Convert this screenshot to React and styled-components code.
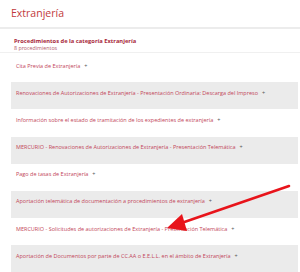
import React from "react";
import styled, { createGlobalStyle } from "styled-components";

const Global = createGlobalStyle`
  html, body { margin: 0; padding: 0; background: #fff; }
  body { font-family: "Open Sans", "DejaVu Sans", sans-serif; width: 300px; height: 272px; overflow: hidden; }
`;

const Page = styled.div`
  position: relative;
  width: 300px;
  height: 272px;
  overflow: hidden;
  background: #fff;
`;

const Header = styled.header`
  display: flex;
  align-items: center;
  padding-left: 11px;
  border-bottom: 2px solid #ececec;
  box-sizing: border-box;
  height: 29px;
  padding-bottom: 2px;
`;

const Title = styled.h1`
  margin: 0;
  font-size: 10.5px;
  font-weight: 400;
  color: #c1393c;
`;

const Section = styled.section`
  padding: 8.5px 0 1.5px 14px;
  border-bottom: 1px solid #f0f0f0;
  margin-bottom: 2px;
`;

const Heading = styled.h2`
  margin: 0;
  font-size: 5.75px;
  line-height: 7px;
  font-weight: 700;
  color: #a8283a;
`;

const Sub = styled.div`
  font-size: 5.3px;
  line-height: 6px;
  color: #b4606c;
`;

const List = styled.ul`
  list-style: none;
  margin: 0 2px 0 11px;
  padding: 0;
`;

const Row = styled.li`
  height: 27.2px;
  box-sizing: border-box;
  padding: 7.5px 0 0 5px;
  font-size: 5.5px;
  line-height: 7px;
  white-space: nowrap;
  background: ${(p) => (p.$shade ? "#ebebeb" : "#fff")};
`;

const Link = styled.a`
  color: #c2465a;
  text-decoration: none;
`;

const Plus = styled.span`
  display: inline-block;
  margin-left: 4px;
  color: #555;
`;

const Arrow = styled.svg`
  position: absolute;
  left: 0;
  top: 0;
  pointer-events: none;
`;

const items = [
  "Cita Previa de Extranjería",
  "Renovaciones de Autorizaciones de Extranjería - Presentación Ordinaria: Descarga del Impreso",
  "Información sobre el estado de tramitación de los expedientes de extranjería",
  "MERCURIO - Renovaciones de Autorizaciones de Extranjería - Presentación Telemática",
  "Pago de tasas de Extranjería",
  "Aportación telemática de documentación a procedimientos de extranjería",
  "MERCURIO - Solicitudes de autorizaciones de Extranjería - Presentación Telemática",
  "Aportación de Documentos por parte de CC.AA o E.E.L.L. en el ámbito de Extranjería",
];

export default function App() {
  return (
    <Page>
      <Global />
      <Header>
        <Title>Extranjería</Title>
      </Header>
      <Section>
        <Heading>Procedimientos de la categoría Extranjería</Heading>
        <Sub>8 procedimientos</Sub>
      </Section>
      <List>
        {items.map((t, i) => (
          <Row key={i} $shade={i % 2 === 1}>
            <Link href="#">{t}</Link>
            <Plus>+</Plus>
          </Row>
        ))}
      </List>
      <Arrow width="300" height="272" viewBox="0 0 300 272">
        <line x1="289" y1="186" x2="180" y2="223.5" stroke="#e8141b" strokeWidth="2.6" strokeLinecap="round" />
        <polygon points="167,228 182,214 187,231" fill="#e8141b" />
      </Arrow>
    </Page>
  );
}
